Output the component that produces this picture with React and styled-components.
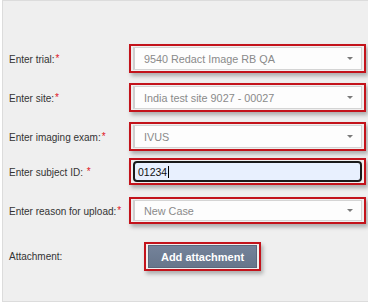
import styled, { createGlobalStyle } from "styled-components";

const GlobalStyle = createGlobalStyle`
  body {
    margin: 0;
    background: #ffffff;
    font-family: "Liberation Sans", Arial, sans-serif;
  }
`;

const Panel = styled.div`
  margin-left: 2px;
  height: 302px;
  box-sizing: border-box;
  background: #efefef;
  border: 1px solid #dcdcdc;
  border-right: none;
  padding: 43px 0 0 5px;
`;

const Row = styled.div`
  display: flex;
  align-items: center;
  height: ${(p) => p.$h || 29}px;
  margin-top: ${(p) => p.$top || 0}px;
`;

const Label = styled.label`
  width: 120px;
  flex-shrink: 0;
  font-size: 10px;
  color: #333;
  padding-left: 1px;
  white-space: nowrap;
  sup {
    color: #e0141e;
    font-size: 10px;
    vertical-align: 1px;
    margin-left: 1px;
  }
`;

const Highlight = styled.div`
  box-sizing: border-box;
  width: ${(p) => p.$w || 237}px;
  height: 100%;
  margin-left: ${(p) => p.$left || 0}px;
  border: 2px solid #c3131b;
  padding: 1px 2px;
  box-shadow: 2px 3px 4px rgba(0, 0, 0, 0.28);
  display: flex;
`;

const Select = styled.div`
  flex: 1;
  display: flex;
  align-items: center;
  justify-content: space-between;
  background: #fdfdfd;
  border: 1px solid #d4d4d4;
  border-left: 2px solid #cfcfcf;
  padding: 0 8px 0 9px;
  font-size: 10.8px;
  color: #8a8a8a;
`;

const Arrow = styled.span`
  width: 0;
  height: 0;
  border-left: 3px solid transparent;
  border-right: 3px solid transparent;
  border-top: 3px solid #7a7a7a;
`;

const Input = styled.div`
  flex: 1;
  display: flex;
  align-items: center;
  background: #e8f0fe;
  border: 2px solid #1a1a1a;
  border-radius: 4px;
  padding-left: 3px;
  font-size: 10.5px;
  color: #111;
`;

const Caret = styled.span`
  display: inline-block;
  width: 1px;
  height: 12px;
  background: #000;
  margin-left: 1px;
`;

const Button = styled.button`
  flex: 1;
  border: 1px solid #5a687c;
  background: linear-gradient(#74829a, #67768b);
  color: #fff;
  font-family: "Liberation Sans", Arial, sans-serif;
  font-weight: bold;
  font-size: 11px;
  padding: 0;
`;

const fields = [
  { label: "Enter trial:", value: "9540 Redact Image RB QA", top: 0 },
  { label: "Enter site:", value: "India test site 9027 - 00027", top: 10 },
  { label: "Enter imaging exam:", value: "IVUS", top: 10 },
];

export default function App() {
  return (
    <>
      <GlobalStyle />
      <Panel>
        {fields.map((f) => (
          <Row key={f.label} $top={f.top}>
            <Label>
              {f.label}
              <sup>*</sup>
            </Label>
            <Highlight>
              <Select>
                {f.value}
                <Arrow />
              </Select>
            </Highlight>
          </Row>
        ))}
        <Row $top={7} $h={27}>
          <Label>
            Enter subject ID: <sup>*</sup>
          </Label>
          <Highlight>
            <Input>
              01234
              <Caret />
            </Input>
          </Highlight>
        </Row>
        <Row $top={12} $h={27}>
          <Label>
            Enter reason for upload:<sup>*</sup>
          </Label>
          <Highlight>
            <Select>
              New Case
              <Arrow />
            </Select>
          </Highlight>
        </Row>
        <Row $top={18}>
          <Label>Attachment:</Label>
          <Highlight $w={117} $left={15}>
            <Button>Add attachment</Button>
          </Highlight>
        </Row>
      </Panel>
    </>
  );
}
